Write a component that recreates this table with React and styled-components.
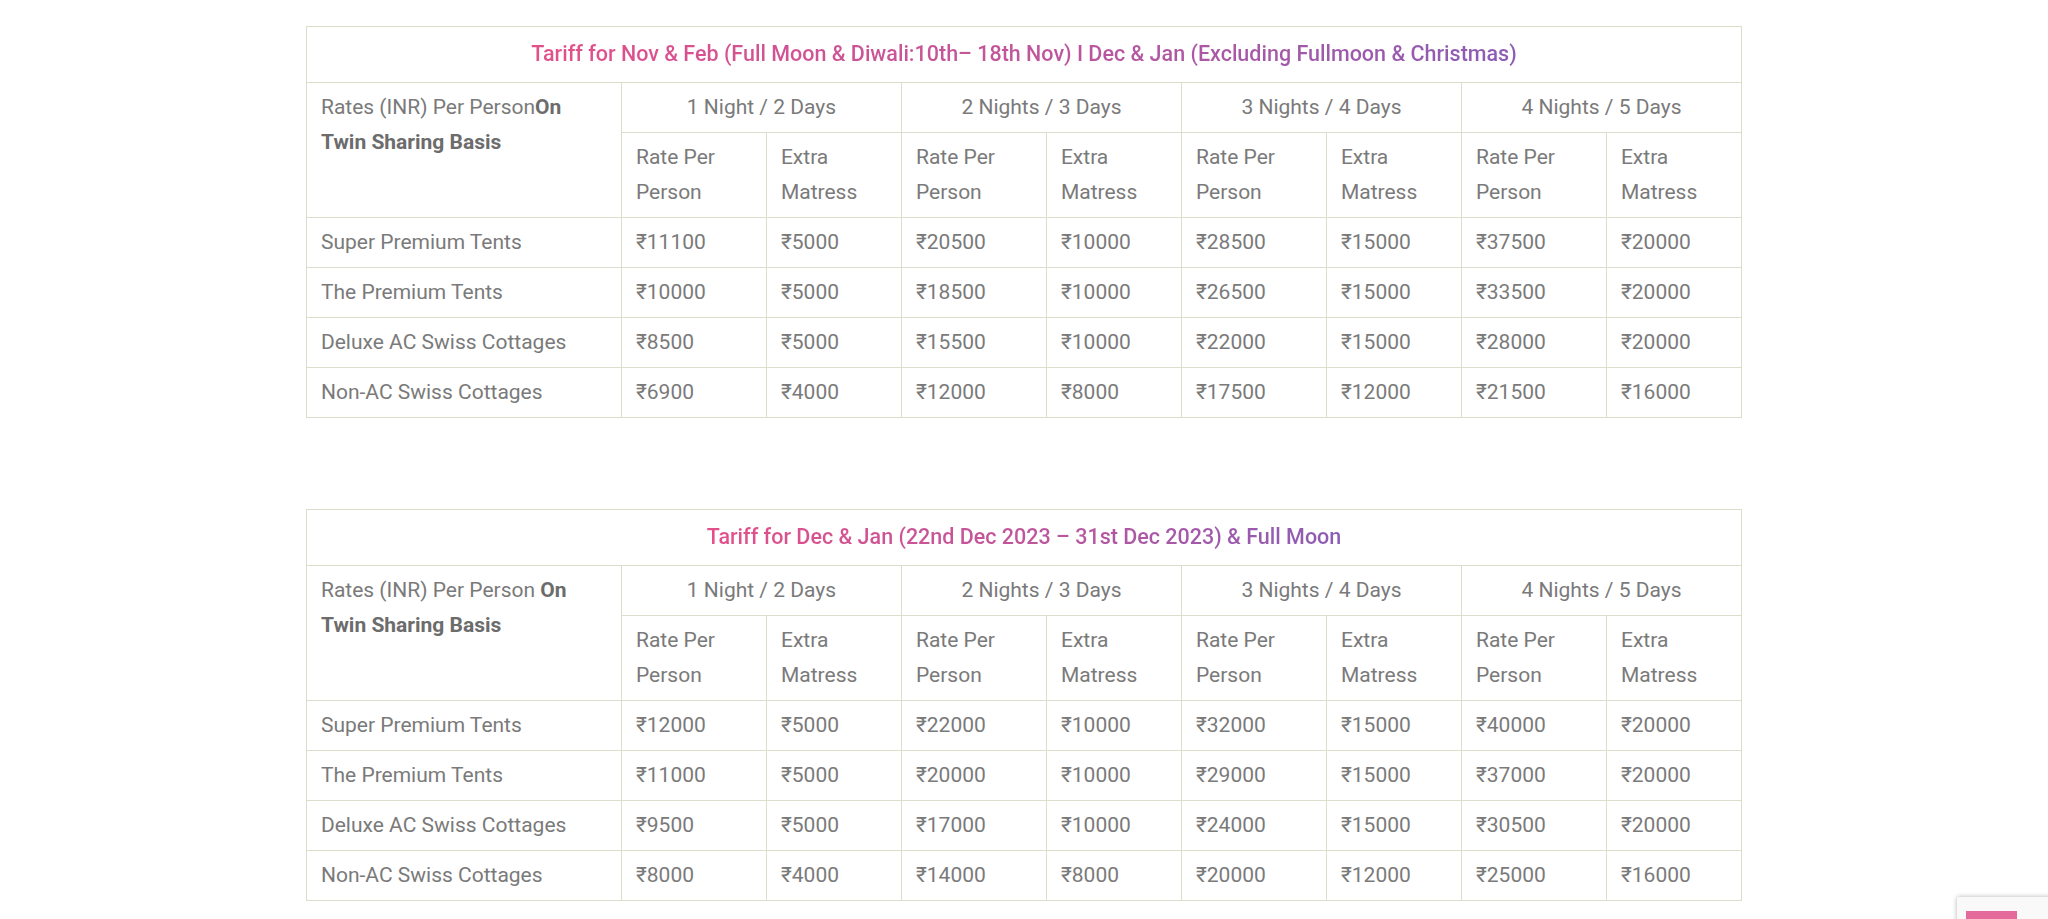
import React from "react";
import styled, { createGlobalStyle } from "styled-components";

const GlobalStyle = createGlobalStyle`
  html, body {
    margin: 0;
    padding: 0;
    background: #ffffff;
  }
  body {
    font-family: Roboto, "Liberation Sans", sans-serif;
    color: #7a7a7a;
  }
`;

const periods = ["1 Night / 2 Days", "2 Nights / 3 Days", "3 Nights / 4 Days", "4 Nights / 5 Days"];

const tariffs = [
  {
    title: "Tariff for Nov & Feb (Full Moon & Diwali:10th– 18th Nov) I Dec & Jan (Excluding Fullmoon & Christmas)",
    label: "Rates (INR) Per Person",
    gap: "",
    rows: [
      ["Super Premium Tents", 11100, 5000, 20500, 10000, 28500, 15000, 37500, 20000],
      ["The Premium Tents", 10000, 5000, 18500, 10000, 26500, 15000, 33500, 20000],
      ["Deluxe AC Swiss Cottages", 8500, 5000, 15500, 10000, 22000, 15000, 28000, 20000],
      ["Non-AC Swiss Cottages", 6900, 4000, 12000, 8000, 17500, 12000, 21500, 16000],
    ],
  },
  {
    title: "Tariff for Dec & Jan (22nd Dec 2023 – 31st Dec 2023) & Full Moon",
    label: "Rates (INR) Per Person",
    gap: " ",
    rows: [
      ["Super Premium Tents", 12000, 5000, 22000, 10000, 32000, 15000, 40000, 20000],
      ["The Premium Tents", 11000, 5000, 20000, 10000, 29000, 15000, 37000, 20000],
      ["Deluxe AC Swiss Cottages", 9500, 5000, 17000, 10000, 24000, 15000, 30500, 20000],
      ["Non-AC Swiss Cottages", 8000, 4000, 14000, 8000, 20000, 12000, 25000, 16000],
    ],
  },
];

function TariffTable({ data }) {
  return (
    <Table>
      <colgroup>
        <col style={{ width: 315 }} />
        {periods.map((p) => (
          <React.Fragment key={p}>
            <col style={{ width: 145 }} />
            <col style={{ width: 135 }} />
          </React.Fragment>
        ))}
      </colgroup>
      <tbody>
        <tr>
          <TitleCell colSpan={9}>
            <TitleText>{data.title}</TitleText>
          </TitleCell>
        </tr>
        <tr>
          <Cell rowSpan={2} $top>
            {data.label}
            {data.gap}
            <strong>On Twin Sharing Basis</strong>
          </Cell>
          {periods.map((p) => (
            <Cell key={p} colSpan={2} $center>
              {p}
            </Cell>
          ))}
        </tr>
        <tr>
          {periods.map((p) => (
            <React.Fragment key={p}>
              <Cell>Rate Per Person</Cell>
              <Cell>Extra Matress</Cell>
            </React.Fragment>
          ))}
        </tr>
        {data.rows.map(([name, ...prices]) => (
          <tr key={name}>
            <Cell>{name}</Cell>
            {prices.map((price, i) => (
              <Cell key={i}>₹{price}</Cell>
            ))}
          </tr>
        ))}
      </tbody>
    </Table>
  );
}

function App() {
  return (
    <>
      <GlobalStyle />
      <Page>
        {tariffs.map((t) => (
          <TariffTable key={t.title} data={t} />
        ))}
      </Page>
      <Badge>
        <BadgeBar />
      </Badge>
    </>
  );
}

const Page = styled.div`
  display: flex;
  flex-direction: column;
  align-items: center;
  gap: 91px;
  padding-top: 26px;
  padding-bottom: 40px;
`;

const Table = styled.table`
  width: 1435px;
  table-layout: fixed;
  border-collapse: collapse;
  border: 1px solid #dedcca;
  font-size: 21px;
  line-height: 35px;
  color: #7a7a7a;
`;

const Cell = styled.td`
  border: 1px solid #dedcca;
  padding: 7px 14px;
  text-align: ${(p) => (p.$center ? "center" : "left")};
  vertical-align: ${(p) => (p.$top ? "top" : "middle")};

  strong {
    font-weight: 700;
    color: #6c6c6c;
  }
`;

const TitleCell = styled.td`
  border: 1px solid #dedcca;
  padding: 9px 14px 10px;
  text-align: center;
`;

const TitleText = styled.span`
  display: inline-block;
  font-size: 21.5px;
  font-weight: 500;
  background: linear-gradient(90deg, #e3508a 0%, #c0559b 50%, #8b5cb5 100%);
  -webkit-background-clip: text;
  background-clip: text;
  color: transparent;
`;

const Badge = styled.div`
  position: fixed;
  left: 1957px;
  top: 897px;
  width: 256px;
  height: 60px;
  background: #f9f9f9;
  border-radius: 2px;
  box-shadow: 0 0 5px rgba(0, 0, 0, 0.3);
`;

const BadgeBar = styled.div`
  margin: 14px 0 0 9px;
  width: 51px;
  height: 20px;
  background: #e56a9c;
`;

export default App;
